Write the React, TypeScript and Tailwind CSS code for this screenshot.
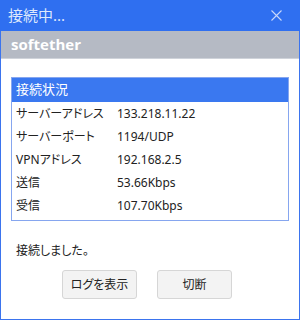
import React from "react";

const rows = [
  ["サーバーアドレス", "133.218.11.22"],
  ["サーバーポート", "1194/UDP"],
  ["VPNアドレス", "192.168.2.5"],
  ["送信", "53.66Kbps"],
  ["受信", "107.70Kbps"],
];

const jp = "font-['Noto_Sans','Noto_Sans_CJK_JP',sans-serif] [font-feature-settings:'palt']";

export default function App() {
  return (
    <div className={`w-[300px] h-[320px] flex flex-col bg-white border-x border-b border-[#3b74ee] ${jp}`}>
      <div className="h-[31px] flex items-center justify-between bg-[#2f6ff0] pl-[8px] pr-[18px] -mx-px">
        <span className="text-[15px] text-[#dfe8fc] leading-none">接続中...</span>
        <svg width="11" height="11" viewBox="0 0 11 11" className="text-[#c9d8fa]">
          <path d="M0.5 0.5 L10.5 10.5 M10.5 0.5 L0.5 10.5" stroke="currentColor" strokeWidth="1.1" />
        </svg>
      </div>
      <div className="h-[28px] flex items-center bg-[#b5bac4] border-b border-[#cfd3da] px-[10px]">
        <span className="font-['Open_Sans',sans-serif] font-bold text-[15px] text-white leading-none">softether</span>
      </div>
      <div className="mt-[18px] mx-[10px] border border-[#86a6ef] pb-[3px]">
        <div className="h-[24px] flex items-center bg-[#3a78f0] px-[4px] text-[13px] text-white">接続状況</div>
        {rows.map(([label, value]) => (
          <div key={label} className="h-[23px] flex items-center px-[4px] text-[12px] text-[#222]">
            <span className="w-[101px]">{label}</span>
            <span>{value}</span>
          </div>
        ))}
      </div>
      <div className="mt-[21px] px-[15px] text-[12px] text-[#222]">接続しました。</div>
      <div className="mt-[10px] flex justify-center gap-[20px] pr-[6px]">
        <button className="w-[75px] h-[29px] rounded-[3px] border border-[#d6d6d6] bg-[#f3f3f3] text-[12px] text-[#222]">ログを表示</button>
        <button className="w-[75px] h-[29px] rounded-[3px] border border-[#d6d6d6] bg-[#f3f3f3] text-[12px] text-[#222]">切断</button>
      </div>
    </div>
  );
}
